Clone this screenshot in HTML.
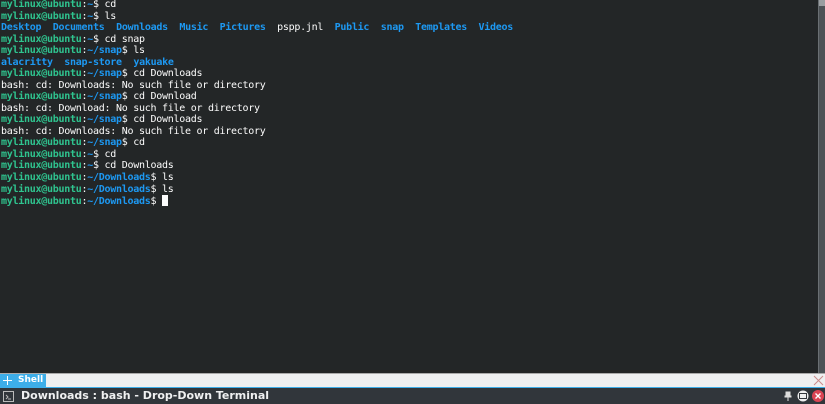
<!DOCTYPE html>
<html><head><meta charset="utf-8"><style>
*{margin:0;padding:0;box-sizing:border-box}
body{width:825px;height:404px;overflow:hidden;background:#232627;position:relative;font-family:"DejaVu Sans Mono",monospace}
#term{position:absolute;left:1px;top:-1px;font-size:10px;letter-spacing:-0.27px;line-height:11.53px;color:#fcfcfc;white-space:pre}
.g{font-weight:bold;color:#2fc48f}
.b{color:#1d99f3;font-weight:bold}
.cur{display:inline-block;width:6px;height:11px;background:#fcfcfc;vertical-align:-2px}
#sb{position:absolute;left:818px;top:0;width:7px;height:373px;background:#4d5256;border-left:1px solid #6a6f73}
#sbt{position:absolute;left:819px;top:0;width:6px;height:6px;background:#9a9ea1}
#tabs{position:absolute;left:0;top:373px;width:825px;height:14px;background:#eff0f1;border-top:1px solid #aaa}
#tab{position:absolute;left:0;top:0;width:46px;height:13px;background:#3daee9;color:#fff;font:bold 9px "DejaVu Sans",sans-serif;line-height:13px;white-space:nowrap}
#bar{position:absolute;left:0;top:387px;width:825px;height:17px;background:#31363b;border-top:1px solid #3daee9;color:#eff0f1;font:bold 11px "DejaVu Sans",sans-serif;line-height:16px}
</style></head><body>
<div id="term"><span class="g">mylinux@ubuntu</span>:<span class="b">~</span>$ cd
<span class="g">mylinux@ubuntu</span>:<span class="b">~</span>$ ls
<span class="b">Desktop</span>  <span class="b">Documents</span>  <span class="b">Downloads</span>  <span class="b">Music</span>  <span class="b">Pictures</span>  pspp.jnl  <span class="b">Public</span>  <span class="b">snap</span>  <span class="b">Templates</span>  <span class="b">Videos</span>
<span class="g">mylinux@ubuntu</span>:<span class="b">~</span>$ cd snap
<span class="g">mylinux@ubuntu</span>:<span class="b">~/snap</span>$ ls
<span class="b">alacritty</span>  <span class="b">snap-store</span>  <span class="b">yakuake</span>
<span class="g">mylinux@ubuntu</span>:<span class="b">~/snap</span>$ cd Downloads
bash: cd: Downloads: No such file or directory
<span class="g">mylinux@ubuntu</span>:<span class="b">~/snap</span>$ cd Download
bash: cd: Download: No such file or directory
<span class="g">mylinux@ubuntu</span>:<span class="b">~/snap</span>$ cd Downloads
bash: cd: Downloads: No such file or directory
<span class="g">mylinux@ubuntu</span>:<span class="b">~/snap</span>$ cd
<span class="g">mylinux@ubuntu</span>:<span class="b">~</span>$ cd
<span class="g">mylinux@ubuntu</span>:<span class="b">~</span>$ cd Downloads
<span class="g">mylinux@ubuntu</span>:<span class="b">~/Downloads</span>$ ls
<span class="g">mylinux@ubuntu</span>:<span class="b">~/Downloads</span>$ ls
<span class="g">mylinux@ubuntu</span>:<span class="b">~/Downloads</span>$ <span class="cur"></span></div>
<div id="sb"></div><div id="sbt"></div>
<div id="tabs"><div id="tab"><svg style="position:absolute;left:3px;top:2px" width="9" height="9"><path d="M4.5 0V9M0 4.5H9" stroke="#fff" stroke-width="1"/></svg><span style="position:absolute;left:18px;top:0">Shell</span></div>
<svg style="position:absolute;left:813px;top:1px" width="11" height="11"><path d="M1 1L10 10M10 1L1 10" stroke="#c98a8a" stroke-width="1"/></svg></div>
<div id="bar">
<svg style="position:absolute;left:3px;top:3px" width="11" height="11"><rect x="0.5" y="0.5" width="10" height="10" fill="none" stroke="#bbb"/><path d="M3 4L5 6L3 8M5 8H8" stroke="#bbb" fill="none"/></svg>
<span style="position:absolute;left:21px;top:0">Downloads : bash - Drop-Down Terminal</span>
<svg style="position:absolute;left:783px;top:3px" width="10" height="11"><path d="M3 1H7V5H8V6H2V5H3Z M5 6V10" stroke="#ddd" fill="#ddd"/></svg>
<svg style="position:absolute;left:797px;top:2px" width="12" height="12"><circle cx="6" cy="6" r="5.5" fill="#eff0f1"/><rect x="2.5" y="3.5" width="7" height="5" fill="none" stroke="#31363b"/></svg>
<svg style="position:absolute;left:812px;top:2px" width="12" height="12"><circle cx="6" cy="6" r="6" fill="#da4453"/><path d="M3.5 3.5L8.5 8.5M8.5 3.5L3.5 8.5" stroke="#fff" stroke-width="1.4"/></svg>
</div>
</body></html>
